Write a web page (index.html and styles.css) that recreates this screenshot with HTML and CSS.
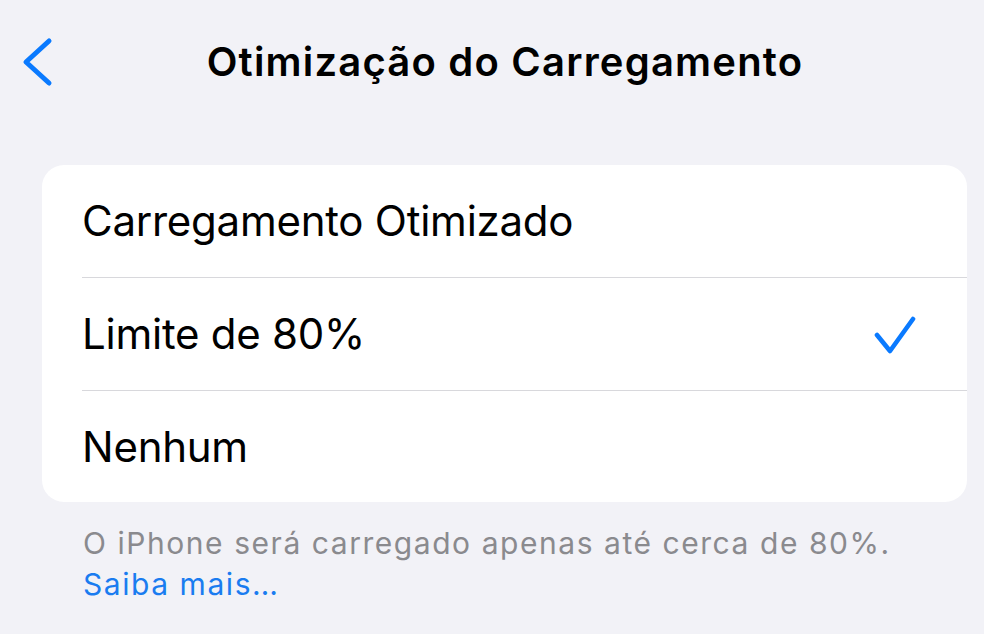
FILE: index.html
```html
<!DOCTYPE html>
<html lang="pt-BR">
<head>
<meta charset="utf-8">
<title>Otimização do Carregamento</title>
<link rel="stylesheet" href="styles.css">
</head>
<body>
<div class="screen">
  <header class="nav">
    <div class="nav-left">
      <svg class="back" width="32" height="50" viewBox="0 0 32 50" aria-label="Voltar">
        <path d="M27 4 L4 25 L27 46" fill="none" stroke="#0a7aff" stroke-width="5" stroke-linecap="round" stroke-linejoin="round"/>
      </svg>
    </div>
    <h1 class="title">Otimização do Carregamento</h1>
    <div class="nav-right"></div>
  </header>

  <section class="card">
    <div class="row"><span class="label">Carregamento Otimizado</span></div>
    <div class="row"><span class="label">Limite de 80%</span>
      <svg class="check" width="44" height="44" viewBox="0 0 44 44" aria-label="Selecionado">
        <path d="M5 23 L18 39 L41 7" fill="none" stroke="#0a7aff" stroke-width="4.6" stroke-linecap="round" stroke-linejoin="round"/>
      </svg>
    </div>
    <div class="row"><span class="label">Nenhum</span></div>
  </section>

  <p class="footer">O iPhone será carregado apenas até cerca de 80%.<a class="link" href="#">Saiba mais…</a></p>
</div>
</body>
</html>
```

FILE: styles.css
```css
html, body {
  margin: 0;
  padding: 0;
  background: #f2f2f7;
}

body {
  font-family: Inter, "Noto Sans", "Liberation Sans", sans-serif;
  color: #000;
  width: 984px;
  height: 634px;
  overflow: hidden;
}

.nav {
  height: 124px;
  display: grid;
  grid-template-columns: 1fr auto 1fr;
  align-items: center;
  padding-left: 26px;
  padding-right: 0;
}

.nav-left {
  display: flex;
  align-items: center;
}

.back {
  display: block;
  margin-left: -4px;
}

.title {
  margin: 0;
  font-size: 40px;
  font-weight: 600;
  letter-spacing: 1.2px;
  line-height: 1;
}

.card {
  margin: 41px 17px 0 42px;
  background: #fff;
  border-radius: 22px;
  overflow: hidden;
}

.row {
  margin-left: 40px;
  height: 113px;
  box-sizing: border-box;
  border-bottom: 1px solid #d8d8dc;
  display: flex;
  align-items: center;
  padding-right: 51px;
}

.row:last-child {
  border-bottom: none;
  height: 111px;
}

.label {
  font-size: 42px;
  font-weight: 400;
  letter-spacing: -0.25px;
  line-height: 1;
}

.check {
  display: block;
  margin-left: auto;
}

.footer {
  margin: 21px 0 0 83px;
  font-size: 30px;
  letter-spacing: 1.55px;
  line-height: 41px;
  color: #8a8a8e;
}

.link {
  display: block;
  color: #1a7cf0;
  text-decoration: none;
}
```
